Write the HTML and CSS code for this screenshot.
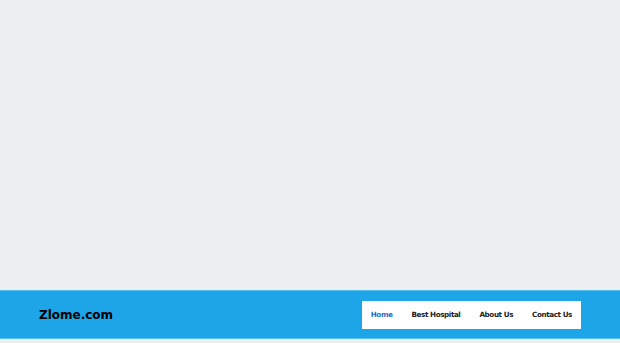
FILE: index.html
```html
<!DOCTYPE html>
<html>
<head>
  <title>Zlome.com</title>
  <link rel="stylesheet" href="styles.css">
</head>
<body>
  <div class="hero"></div>
  <div class="topbar">
    <a class="logo" href="#">Zlome.com</a>
    <ul class="menu">
      <li><a href="#" class="active">Home</a></li>
      <li><a href="#">Best Hospital</a></li>
      <li><a href="#">About Us</a></li>
      <li><a href="#">Contact Us</a></li>
    </ul>
  </div>
</body>
</html>
```

FILE: styles.css
```css
/* page */
body {
  margin: 0;
  background-color: #eceef1;
  font-family: "DejaVu Sans", Verdana, sans-serif;
}
.hero {
  height: 290px;
}

/* blue bar */
.topbar {
  height: 47px;
  background-color: #1ea5e7;
  border-top: 1px solid #55bdee;
  border-bottom: 1px solid #55bdee;
  padding: 0 39px;
  display: flex;
  align-items: center;
  justify-content: space-between;
}
.logo {
  color: #000;
  font-weight: bold;
  font-size: 12px;
  line-height: 14px;
  text-decoration: none;
}

/* menu */
.menu {
  list-style: none;
  margin: 0;
  padding: 0 9px;
  height: 28px;
  background-color: white;
  display: flex;
  align-items: center;
  gap: 19px;
  font-weight: bold;
  font-size: 7.2px;
  letter-spacing: -0.4px;
  line-height: 10px;
}
.menu li {
  padding-top: 1px;
}
.menu a {
  color: #222;
  text-decoration: none;
}
.menu a.active {
  color: #1a6fcb;
}
```
